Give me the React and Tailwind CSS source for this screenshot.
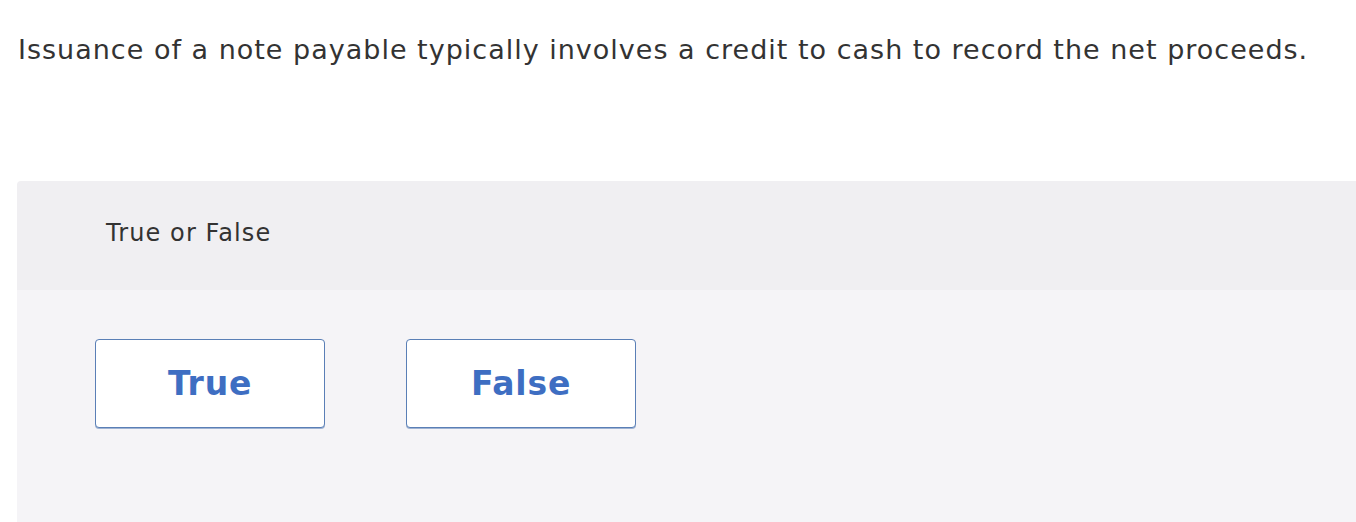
export default function App() {
  return (
    <div
      className="w-[1356px] h-[522px] overflow-hidden bg-white"
      style={{ fontFamily: "'DejaVu Sans', 'Open Sans', sans-serif" }}
    >
      <p className="pl-[18px] pt-[32px] text-[27px] leading-[36px] tracking-[1px] text-[#333333]">
        Issuance of a note payable typically involves a credit to cash to record the net proceeds.
      </p>
      <div className="ml-[17px] mt-[113px] rounded-tl-[4px] overflow-hidden">
        <div className="h-[109px] bg-[#f0eff2] pl-[89px] pt-[37px]">
          <span className="text-[24px] leading-[30px] tracking-[1.1px] text-[#333333]">True or False</span>
        </div>
        <div className="h-[232px] bg-[#f5f4f7] pl-[78px] pt-[49px] flex gap-[81px] items-start">
          <button className="w-[230px] h-[89px] bg-white border-[1.5px] border-[#5a7fb6] rounded-[4px] text-[33px] font-bold tracking-[0.8px] text-[#3e6ec2] shadow-[0_1px_0_#9fb3d3]">
            True
          </button>
          <button className="w-[230px] h-[89px] bg-white border-[1.5px] border-[#5a7fb6] rounded-[4px] text-[33px] font-bold tracking-[0.8px] text-[#3e6ec2] shadow-[0_1px_0_#9fb3d3]">
            False
          </button>
        </div>
      </div>
    </div>
  );
}
